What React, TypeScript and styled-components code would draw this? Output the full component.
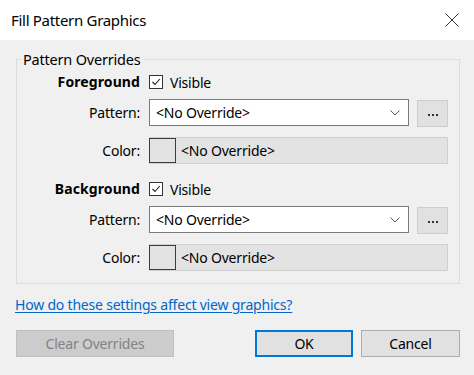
import styled, { createGlobalStyle } from 'styled-components'

const GlobalStyle = createGlobalStyle`
  html, body {
    margin: 0;
    padding: 0;
    background: #f0f0f0;
  }
  body {
    font-family: "Noto Sans", "Open Sans", sans-serif;
    font-size: 14px;
    letter-spacing: -0.2px;
    color: #000;
  }
`

const Window = styled.div`
  width: 474px;
  height: 375px;
  display: flex;
  flex-direction: column;
  background: #f0f0f0;
  overflow: hidden;
`

const TitleBar = styled.div`
  height: 40px;
  flex-shrink: 0;
  background: #fff;
  display: flex;
  align-items: center;
  justify-content: space-between;
  padding: 0 14px 0 11px;
`

const Title = styled.div`
  font-size: 15px;
  letter-spacing: -0.3px;
  line-height: 20px;
  margin-top: -1px;
`

const Close = styled.button`
  width: 16px;
  height: 16px;
  padding: 0;
  border: none;
  background: none;
  display: flex;
  align-items: center;
  justify-content: center;
  margin-top: -1px;
`

const Body = styled.div`
  padding: 10px 14px 0 16px;
  display: flex;
  flex-direction: column;
`

const Group = styled.fieldset`
  margin: 0;
  padding: 4px 11px 12px 0;
  border: 1px solid #dcdcdc;
  min-width: 0;
`

const Legend = styled.legend`
  margin-left: 4px;
  padding: 0 2px;
  line-height: 18px;
  font-size: 14.5px;
`

const Row = styled.div<{ $top: number }>`
  display: flex;
  align-items: center;
  height: 27px;
  margin-top: ${(p) => p.$top}px;
`

const Header = styled(Row)`
  height: 20px;
`

const Label = styled.div<{ $bold?: boolean }>`
  width: 123px;
  flex-shrink: 0;
  text-align: right;
  font-weight: ${(p) => (p.$bold ? 700 : 400)};
  letter-spacing: ${(p) => (p.$bold ? '0.1px' : '-0.2px')};
  margin-right: 9px;
  line-height: 20px;
`

const Check = styled.span`
  width: 12px;
  height: 12px;
  border: 1px solid #333;
  background: #fff;
  display: inline-flex;
  align-items: center;
  justify-content: center;
  margin-right: 7px;
`

const Select = styled.div`
  flex: 1;
  height: 27px;
  box-sizing: border-box;
  border: 1px solid #7a7a7a;
  background: #fff;
  display: flex;
  align-items: center;
  justify-content: space-between;
  padding: 0 8px 0 6px;
`

const MoreButton = styled.button`
  width: 31px;
  height: 27px;
  margin-left: 8px;
  margin-top: 2px;
  box-sizing: border-box;
  border: 1px solid #cdcdcd;
  background: #e1e1e1;
  display: flex;
  align-items: center;
  justify-content: center;
  gap: 2px;
  padding: 2px 0 0;
`

const Dot = styled.span`
  width: 2px;
  height: 2px;
  background: #333;
`

const ColorField = styled.div`
  flex: 1;
  height: 27px;
  box-sizing: border-box;
  border: 1px solid #cfcfcf;
  background: #e3e3e3;
  display: flex;
  align-items: center;
`

const Swatch = styled.span`
  width: 27px;
  height: 25px;
  box-sizing: border-box;
  border: 1px solid #3c3c3c;
  background: #e3e3e3;
  margin-left: -1px;
  margin-right: 5px;
`

const Link = styled.a`
  margin-top: 11px;
  line-height: 20px;
  color: #0066cc;
  text-decoration: underline;
  text-underline-offset: 2px;
  align-self: flex-start;
  margin-left: -1px;
`

const Buttons = styled.div`
  display: flex;
  align-items: center;
  margin-top: 15px;
`

const Button = styled.button<{ $w: number; $variant?: 'default' | 'disabled' }>`
  width: ${(p) => p.$w}px;
  height: 27px;
  box-sizing: border-box;
  font-family: inherit;
  font-size: 14px;
  letter-spacing: -0.2px;
  padding: 0;
  color: ${(p) => (p.$variant === 'disabled' ? '#838383' : '#000')};
  background: ${(p) => (p.$variant === 'disabled' ? '#cccccc' : '#e1e1e1')};
  border: 1px solid ${(p) => (p.$variant === 'disabled' ? '#bfbfbf' : '#adadad')};
`

const DefaultButton = styled(Button)`
  border: 2px solid #0078d7;
  margin-left: auto;
  margin-right: 8px;
`

const Chevron = () => (
  <svg width="10" height="6" viewBox="0 0 10 6">
    <path d="M0.5 0.5 L5 5 L9.5 0.5" fill="none" stroke="#555" strokeWidth="1" />
  </svg>
)

const CheckMark = () => (
  <svg width="10" height="10" viewBox="0 0 10 10">
    <path d="M1.5 5 L4 7.5 L8.8 2" fill="none" stroke="#222" strokeWidth="1.1" />
  </svg>
)

const Section = ({ name, first }: { name: string; first?: boolean }) => (
  <>
    <Header $top={first ? 0 : 15}>
      <Label $bold>{name}</Label>
      <Check>
        <CheckMark />
      </Check>
      Visible
    </Header>
    <Row $top={7}>
      <Label>Pattern:</Label>
      <Select>
        &lt;No Override&gt;
        <Chevron />
      </Select>
      <MoreButton aria-label="more">
        <Dot />
        <Dot />
        <Dot />
      </MoreButton>
    </Row>
    <Row $top={11}>
      <Label>Color:</Label>
      <ColorField>
        <Swatch />
        &lt;No Override&gt;
      </ColorField>
    </Row>
  </>
)

export default function App() {
  return (
    <>
      <GlobalStyle />
      <Window>
        <TitleBar>
          <Title>Fill Pattern Graphics</Title>
          <Close aria-label="close">
            <svg width="14" height="14" viewBox="0 0 14 14">
              <path d="M0.5 0.5 L13.5 13.5 M13.5 0.5 L0.5 13.5" stroke="#333" strokeWidth="1" />
            </svg>
          </Close>
        </TitleBar>
        <Body>
          <Group>
            <Legend>Pattern Overrides</Legend>
            <Section name="Foreground" first />
            <Section name="Background" />
          </Group>
          <Link href="#">How do these settings affect view graphics?</Link>
          <Buttons>
            <Button $w={158} $variant="disabled">Clear Overrides</Button>
            <DefaultButton $w={98}>OK</DefaultButton>
            <Button $w={99}>Cancel</Button>
          </Buttons>
        </Body>
      </Window>
    </>
  )
}
